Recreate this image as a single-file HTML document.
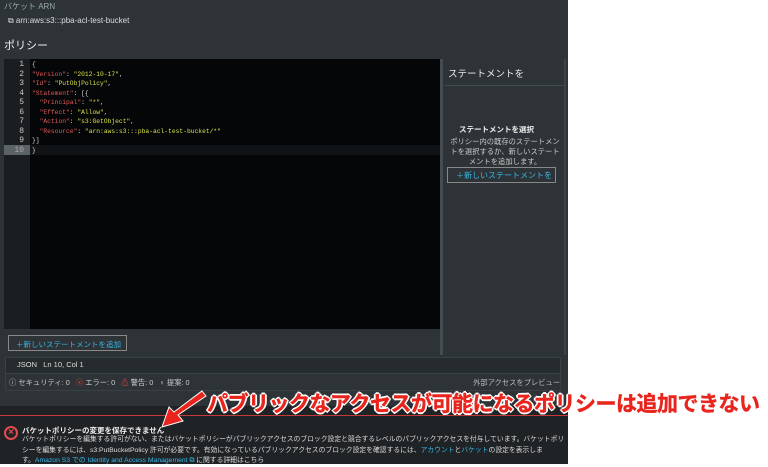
<!DOCTYPE html>
<html><head><meta charset="utf-8"><style>
*{margin:0;padding:0;box-sizing:border-box}
body{width:768px;height:464px;background:#fff;position:relative;overflow:hidden;font-family:"Liberation Sans","Noto Sans CJK JP",sans-serif}
.main{position:absolute;left:0;top:0;width:568px;height:464px;background:#2d3336}
.a{position:absolute;white-space:nowrap}
.code{position:absolute;left:4px;top:59px;width:436px;height:270px;background:#050607}
.gut{position:absolute;left:0;top:0;width:26px;height:270px;background:#1a1e21}
.ln{position:absolute;right:6px;font:8px "Liberation Mono",monospace;color:#c8c8c8}
.cl{position:absolute;left:28px;font:6.3px "Liberation Mono",monospace;color:#ddd;white-space:pre}
.k{color:#e05a5a}.s{color:#d8e04a}
</style></head><body>
<div class="main">
<div class="a" style="left:4px;top:1px;font-size:8px;color:#9aa">バケット ARN</div>
<div class="a" style="left:8px;top:16px;font-size:8px;color:#ddd">⧉ arn:aws:s3:::pba-acl-test-bucket</div>
<div class="a" style="left:4px;top:37px;font-size:11px;color:#eee">ポリシー</div>
<div class="code"><div class="gut">
<div style="position:absolute;left:0;top:86px;width:26px;height:10px;background:#5b6367"></div>
<div class="ln" style="top:1px">1</div><div class="ln" style="top:11px">2</div><div class="ln" style="top:20px">3</div><div class="ln" style="top:30px">4</div><div class="ln" style="top:39px">5</div><div class="ln" style="top:49px">6</div><div class="ln" style="top:58px">7</div><div class="ln" style="top:68px">8</div><div class="ln" style="top:77px">9</div><div class="ln" style="top:87px;color:#aaa">10</div>
</div>
<div style="position:absolute;left:26px;top:86px;width:410px;height:10px;background:#111416"></div>
<div class="cl" style="top:2px">{</div>
<div class="cl" style="top:12px"><span class="k">"Version"</span>: <span class="s">"2012-10-17"</span>,</div>
<div class="cl" style="top:21px"><span class="k">"Id"</span>: <span class="s">"PutObjPolicy"</span>,</div>
<div class="cl" style="top:31px"><span class="k">"Statement"</span>: [{</div>
<div class="cl" style="top:40px">  <span class="k">"Principal"</span>: <span class="s">"*"</span>,</div>
<div class="cl" style="top:50px">  <span class="k">"Effect"</span>: <span class="s">"Allow"</span>,</div>
<div class="cl" style="top:59px">  <span class="k">"Action"</span>: <span class="s">"s3:GetObject"</span>,</div>
<div class="cl" style="top:69px">  <span class="k">"Resource"</span>: <span class="s">"arn:aws:s3:::pba-acl-test-bucket/*"</span></div>
<div class="cl" style="top:78px">}]</div>
<div class="cl" style="top:88px">}</div>
</div>
<div style="position:absolute;left:440px;top:59px;width:3px;height:296px;background:#464d51"></div>
<div style="position:absolute;left:443px;top:59px;width:123px;height:296px;border-right:2px solid #3d4448"></div>
<div class="a" style="left:448px;top:66px;font-size:9.5px;color:#eee">ステートメントを</div>
<div style="position:absolute;left:445px;top:85px;width:119px;height:1px;background:#444b4f"></div>
<div class="a" style="left:459px;top:124px;font-size:7.5px;color:#eee;font-weight:bold">ステートメントを選択</div>
<div class="a" style="left:447px;top:137px;width:116px;font-size:7.3px;color:#ccc;text-align:center;white-space:normal;line-height:10px">ポリシー内の既存のステートメントを選択するか、新しいステートメントを追加します。</div>
<div style="position:absolute;left:447px;top:167px;width:109px;height:16px;border:1px solid #888;color:#3ab8e8;font-size:8px;padding:2px 0 0 8px;overflow:hidden;white-space:nowrap">＋新しいステートメントを</div>
<div style="position:absolute;left:8px;top:335px;width:119px;height:16px;border:1px solid #888;color:#3ab8e8;font-size:7.5px;padding:3px 0 0 7px;white-space:nowrap">＋新しいステートメントを追加</div>
<div style="position:absolute;left:5px;top:357px;width:556px;height:17px;background:#262b2e;border:1px solid #3a4145"></div>
<div class="a" style="left:17px;top:360px;font-size:7.5px;color:#ddd">JSON&nbsp;&nbsp; Ln 10, Col 1</div>
<div style="position:absolute;left:5px;top:374px;width:556px;height:17px;border:1px solid #3a4145;border-top:0"></div>
<div class="a" style="left:9px;top:378px;font-size:7.3px;color:#ccc">ⓘ セキュリティ: 0 &nbsp;&nbsp;<span style="color:#e44">ⓧ</span> エラー: 0 &nbsp;&nbsp;<span style="color:#e44">⚠</span> 警告: 0 &nbsp;&nbsp;♀ 提案: 0</div>
<div class="a" style="left:473px;top:378px;font-size:7.3px;color:#bbb">外部アクセスをプレビュー</div>
<div style="position:absolute;left:0;top:406px;width:568px;height:58px;background:#1f2326"></div>
<div style="position:absolute;left:0;top:415px;width:568px;height:1px;background:#c43a3a"></div>
<div class="a" style="left:4px;top:426px;width:14px;height:14px;border:2px solid #e34c4c;border-radius:50%;color:#e34c4c;font-size:10px;line-height:10px;text-align:center;font-weight:bold">×</div>
<div class="a" style="left:22px;top:425px;font-size:7.5px;color:#eee;font-weight:bold">バケットポリシーの変更を保存できません</div>
<div class="a" style="left:22px;top:435px;font-size:6.8px;color:#ddd;line-height:10.5px">バケットポリシーを編集する許可がない、またはバケットポリシーがパブリックアクセスのブロック設定と競合するレベルのパブリックアクセスを付与しています。バケットポリ<br>シーを編集するには、s3:PutBucketPolicy 許可が必要です。有効になっているパブリックアクセスのブロック設定を確認するには、<span style="color:#3ab8e8">アカウント</span>と<span style="color:#3ab8e8">バケット</span>の設定を表示しま<br>す。<span style="color:#3ab8e8">Amazon S3 での Identity and Access Management ⧉</span> に関する詳細はこちら</div>
</div>
<svg style="position:absolute;left:150px;top:385px" width="60" height="50"><path d="M52 6 L56 11 L28 30 L33 36 L12 42 L19 22 L24 27 Z" fill="#e8241c" stroke="#fff" stroke-width="1"/></svg>
<div class="a" style="left:207px;top:388px;font-size:21px;font-weight:bold;color:#e8241c;text-shadow:1px 1px 0 #fff,-1px -1px 0 #fff,1px -1px 0 #fff,-1px 1px 0 #fff,2px 0 0 #fff,-2px 0 0 #fff,0 2px 0 #fff,0 -2px 0 #fff;letter-spacing:-0.5px;-webkit-text-stroke:0.4px #e8241c">パブリックなアクセスが可能になるポリシーは追加できない</div>
</body></html>
